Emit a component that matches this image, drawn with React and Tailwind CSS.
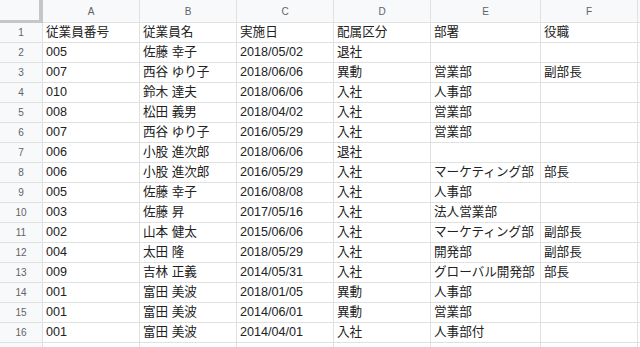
const cols = ["A", "B", "C", "D", "E", "F"];

const rows = [
  ["従業員番号", "従業員名", "実施日", "配属区分", "部署", "役職"],
  ["005", "佐藤 幸子", "2018/05/02", "退社", "", ""],
  ["007", "西谷 ゆり子", "2018/06/06", "異動", "営業部", "副部長"],
  ["010", "鈴木 達夫", "2018/06/06", "入社", "人事部", ""],
  ["008", "松田 義男", "2018/04/02", "入社", "営業部", ""],
  ["007", "西谷 ゆり子", "2016/05/29", "入社", "営業部", ""],
  ["006", "小股 進次郎", "2018/06/06", "退社", "", ""],
  ["006", "小股 進次郎", "2016/05/29", "入社", "マーケティング部", "部長"],
  ["005", "佐藤 幸子", "2016/08/08", "入社", "人事部", ""],
  ["003", "佐藤 昇", "2017/05/16", "入社", "法人営業部", ""],
  ["002", "山本 健太", "2015/06/06", "入社", "マーケティング部", "副部長"],
  ["004", "太田 隆", "2018/05/29", "入社", "開発部", "副部長"],
  ["009", "吉林 正義", "2014/05/31", "入社", "グローバル開発部", "部長"],
  ["001", "富田 美波", "2018/01/05", "異動", "人事部", ""],
  ["001", "富田 美波", "2014/06/01", "異動", "営業部", ""],
  ["001", "富田 美波", "2014/04/01", "入社", "人事部付", ""],
];

const grid = "grid grid-cols-[43px_97px_97px_97px_97px_110px_97px_1fr]";

export default function App() {
  return (
    <div
      className="w-[640px] h-[347px] overflow-hidden bg-white"
      style={{ fontFamily: '"Liberation Sans", Arial, "Noto Sans CJK JP", sans-serif' }}
    >
      {/* column headers */}
      <div className={`${grid} h-[23px]`}>
        <div className="bg-[#f8f9fa] h-[23px]">
          <div className="w-[43px] h-[23px] border-r-4 border-b-[3px] border-[#c4c7c5]" />
        </div>
        {cols.map((c) => (
          <div
            key={c}
            className="bg-[#f8f9fa] border-r border-b border-[#e1e1e1] flex items-center justify-center text-[10px] text-[#5f6368]"
          >
            {c}
          </div>
        ))}
        <div className="bg-[#f8f9fa] border-b border-[#e1e1e1]" />
      </div>

      {/* data rows */}
      {rows.map((r, i) => (
        <div key={i} className={`${grid} h-[20px]`}>
          <div className="bg-[#f8f9fa] border-r border-b border-[#e1e1e1] flex items-center justify-center text-[10px] text-[#5f6368]">
            {i + 1}
          </div>
          {r.map((v, j) => (
            <div
              key={j}
              className="border-r border-b border-[#e1e1e1] pl-[3px] flex items-center text-[12.6px] leading-none text-[#222] whitespace-nowrap overflow-hidden"
            >
              {v}
            </div>
          ))}
          <div className="border-b border-[#e1e1e1]" />
        </div>
      ))}

      {/* partially visible row */}
      <div className={`${grid} h-[20px]`}>
        <div className="bg-[#f8f9fa] border-r border-[#e1e1e1]" />
        {cols.map((c) => (
          <div key={c} className="border-r border-[#e1e1e1]" />
        ))}
        <div />
      </div>
    </div>
  );
}
